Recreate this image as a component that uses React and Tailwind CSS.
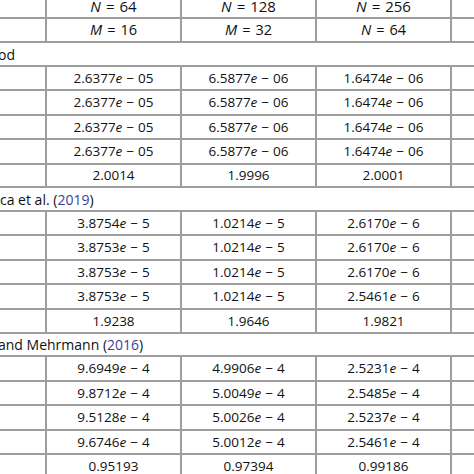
import React from 'react';

const line = 'border-[#9d9d9d]';

const Sci = ({ m, x }) => (
    <span>
        {m}
        <i>e</i>
        <span className="mx-[4px]">−</span>
        {x}
    </span>
);

const Eq = ({ v, n }) => (
    <span>
        <i>{v}</i>
        <span className="mx-[5px]">=</span>
        {n}
    </span>
);

const rows = [
    { type: 'data', h: 'h-[19px]', cells: [<Eq v="N" n="64" />, <Eq v="N" n="128" />, <Eq v="N" n="256" />], head: 'text-[15px] leading-[13px]', cell: 'items-start' },
    { type: 'data', h: 'h-[24px]', cells: [<Eq v="M" n="16" />, <Eq v="M" n="32" />, <Eq v="N" n="64" />], head: 'text-[14.5px]' },
    { type: 'section', h: 'h-[24px]', label: <span className="-ml-[2px]">od</span> },
    { type: 'data', h: 'h-[24px]', cells: [<Sci m="2.6377" x="05" />, <Sci m="6.5877" x="06" />, <Sci m="1.6474" x="06" />] },
    { type: 'data', h: 'h-[25px]', cells: [<Sci m="2.6377" x="05" />, <Sci m="6.5877" x="06" />, <Sci m="1.6474" x="06" />] },
    { type: 'data', h: 'h-[24px]', cells: [<Sci m="2.6377" x="05" />, <Sci m="6.5877" x="06" />, <Sci m="1.6474" x="06" />] },
    { type: 'data', h: 'h-[25px]', cells: [<Sci m="2.6377" x="05" />, <Sci m="6.5877" x="06" />, <Sci m="1.6474" x="06" />] },
    { type: 'data', h: 'h-[23px]', cells: ['2.0014', '1.9996', '2.0001'] },
    {
        type: 'section', h: 'h-[24px]',
        label: <span>ca et al. (<span className="text-[#3d3d9c]">2019</span>)</span>,
    },
    { type: 'data', h: 'h-[24px]', cells: [<Sci m="3.8754" x="5" />, <Sci m="1.0214" x="5" />, <Sci m="2.6170" x="6" />] },
    { type: 'data', h: 'h-[25px]', cells: [<Sci m="3.8753" x="5" />, <Sci m="1.0214" x="5" />, <Sci m="2.6170" x="6" />] },
    { type: 'data', h: 'h-[24px]', cells: [<Sci m="3.8753" x="5" />, <Sci m="1.0214" x="5" />, <Sci m="2.6170" x="6" />] },
    { type: 'data', h: 'h-[25px]', cells: [<Sci m="3.8753" x="5" />, <Sci m="1.0214" x="5" />, <Sci m="2.5461" x="6" />] },
    { type: 'data', h: 'h-[24px]', cells: ['1.9238', '1.9646', '1.9821'] },
    {
        type: 'section', h: 'h-[23px]',
        label: <span className="-ml-[2px]">and Mehrmann (<span className="text-[#3d3d9c]">2016</span>)</span>,
    },
    { type: 'data', h: 'h-[25px]', cells: [<Sci m="9.6949" x="4" />, <Sci m="4.9906" x="4" />, <Sci m="2.5231" x="4" />] },
    { type: 'data', h: 'h-[24px]', cells: [<Sci m="9.8712" x="4" />, <Sci m="5.0049" x="4" />, <Sci m="2.5485" x="4" />] },
    { type: 'data', h: 'h-[25px]', cells: [<Sci m="9.5128" x="4" />, <Sci m="5.0026" x="4" />, <Sci m="2.5237" x="4" />] },
    { type: 'data', h: 'h-[24px]', cells: [<Sci m="9.6746" x="4" />, <Sci m="5.0012" x="4" />, <Sci m="2.5461" x="4" />] },
    { type: 'data', h: 'h-[24px]', cells: ['0.95193', '0.97394', '0.99186'] },
    { type: 'data', h: 'h-[24px]', cells: ['', '', ''] },
];

export default function App() {
    return (
        <div className="w-[474px] h-[474px] overflow-hidden bg-white text-[#111] text-[13.5px] font-['Open_Sans',sans-serif]">
            {rows.map((row, i) =>
                row.type === 'section' ? (
                    <div key={i} className={`${row.h} flex items-center border-b-2 ${line} whitespace-nowrap text-[14px]`}>
                        {row.label}
                    </div>
                ) : (
                    <div key={i} className={`${row.h} flex border-b-2 ${line} ${row.head || ''}`}>
                        <div className={`w-[47px] shrink-0 border-r-2 ${line}`} />
                        {row.cells.map((c, j) => (
                            <div key={j} className={`w-[135px] shrink-0 border-r-2 ${line} flex ${row.cell || 'items-center'} justify-center whitespace-nowrap`}>
                                {c}
                            </div>
                        ))}
                        <div className="flex-1" />
                    </div>
                )
            )}
        </div>
    );
}
